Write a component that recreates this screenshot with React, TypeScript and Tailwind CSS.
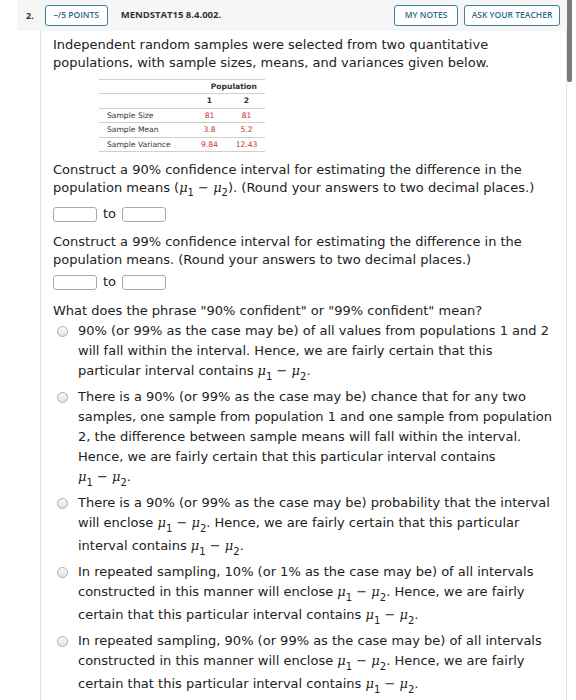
import React from "react";

const Mu = ({ n, tight }: { n: string; tight?: boolean }) => (
  <span className="whitespace-nowrap">
    <span className="italic font-['DejaVu_Serif',serif]">μ</span>
    {tight ? (
      <sub className="align-[-4px] text-[10px] leading-none static">{n}</sub>
    ) : (
      <sub className="align-[-5px] text-[10px] leading-[14px] static">{n}</sub>
    )}
  </span>
);

const Diff = ({ tight }: { tight?: boolean }) => (
  <span className="whitespace-nowrap">
    <Mu n="1" tight={tight} /> − <Mu n="2" tight={tight} />
  </span>
);

const Radio = () => (
  <span className="absolute left-[-21px] top-[5px] w-[11px] h-[11px] rounded-full border border-[#ababab] bg-gradient-to-b from-[#fafafa] to-[#e2e2e2]" />
);

const Option = ({ children }: { children: React.ReactNode }) => (
  <div className="relative leading-[20px]">
    <Radio />
    {children}
  </div>
);

const Box = () => (
  <span className="inline-block w-[44px] h-[15px] border border-[#a9a9a9] rounded-[3px] bg-white align-middle" />
);

export default function App() {
  return (
    <div className="relative w-[576px] h-[700px] overflow-hidden bg-white font-['DejaVu_Sans',Verdana,sans-serif] text-[13px] text-[#222]">
      {/* header */}
      <div className="ml-[17px] w-[550px] h-[31px] bg-[#f6f6f6] flex items-center font-['Open_Sans',sans-serif]">
        <span className="ml-[9px] text-[9px] font-bold text-[#333]">2.</span>
        <span className="ml-[11px] h-[21px] w-[63px] justify-center flex items-center border border-[#3f7fa0] rounded-[3px] bg-white text-[8.5px] font-semibold text-[#2c6a8c]">
          –/5 POINTS
        </span>
        <span className="ml-[13px] text-[9.5px] font-bold text-[#333]">MENDSTAT15 8.4.002.</span>
        <span className="ml-auto h-[21px] w-[64px] justify-center flex items-center border border-[#3f7fa0] rounded-[3px] bg-white text-[8.5px] font-semibold text-[#2c6a8c]">
          MY NOTES
        </span>
        <span className="ml-[6px] mr-[7px] h-[21px] w-[96px] justify-center flex items-center border border-[#3f7fa0] rounded-[3px] bg-white text-[8.5px] font-semibold text-[#2c6a8c]">
          ASK YOUR TEACHER
        </span>
      </div>

      {/* panel */}
      <div className="ml-[40px] w-[527px] h-[669px] border-l border-r border-[#e3e3e3] pl-[12px] pr-[8px] pt-[5px]">
        <p className="leading-[18px]">
          Independent random samples were selected from two quantitative populations, with sample sizes, means, and variances given below.
        </p>

        <table className="ml-[46px] mt-[7px] w-[166px] table-fixed text-[7.6px] text-[#333] border-collapse">
          <colgroup>
            <col className="w-[92px]" />
            <col className="w-[37px]" />
            <col className="w-[37px]" />
          </colgroup>
          <tbody>
            <tr className="border-t border-b border-[#cfcfcf] h-[14px]">
              <td />
              <td colSpan={2} className="text-right pr-[8px] font-bold">Population</td>
            </tr>
            <tr className="border-b border-[#cfcfcf] h-[15px]">
              <td />
              <td className="text-center font-bold">1</td>
              <td className="text-center font-bold">2</td>
            </tr>
            <tr className="border-b border-[#cfcfcf] h-[14px]">
              <td className="pl-[8px]">Sample Size</td>
              <td className="text-center text-[#c9302c]">81</td>
              <td className="text-center text-[#c9302c]">81</td>
            </tr>
            <tr className="border-b border-[#cfcfcf] h-[15px]">
              <td className="pl-[8px]">Sample Mean</td>
              <td className="text-center text-[#c9302c]">3.8</td>
              <td className="text-center text-[#c9302c]">5.2</td>
            </tr>
            <tr className="border-b border-[#cfcfcf] h-[14px]">
              <td className="pl-[8px]">Sample Variance</td>
              <td className="text-center text-[#c9302c]">9.84</td>
              <td className="text-center text-[#c9302c]">12.43</td>
            </tr>
          </tbody>
        </table>

        <p className="mt-[9px] leading-[18px]">
          Construct a 90% confidence interval for estimating the difference in the population means (<Diff tight />). (Round your answers to two decimal places.)
        </p>
        <div className="mt-[7px] flex items-center gap-[6px] h-[18px]">
          <Box />
          <span>to</span>
          <Box />
        </div>

        <p className="mt-[10px] leading-[18px]">
          Construct a 99% confidence interval for estimating the difference in the population means. (Round your answers to two decimal places.)
        </p>
        <div className="mt-[4px] flex items-center gap-[6px] h-[18px]">
          <Box />
          <span>to</span>
          <Box />
        </div>

        <p className="mt-[11px] leading-[18px]">What does the phrase "90% confident" or "99% confident" mean?</p>

        <div className="ml-[25px] mt-[1px] flex flex-col gap-[3px]">
          <Option>
            90% (or 99% as the case may be) of all values from populations 1 and 2 will fall within the interval. Hence, we are fairly certain that this
            <br />
            particular interval contains <Diff />.
          </Option>
          <Option>
            There is a 90% (or 99% as the case may be) chance that for any two samples, one sample from population 1 and one sample from population 2, the difference between sample means will fall within the interval. Hence, we are fairly certain that this particular interval contains
            <br />
            <Diff />.
          </Option>
          <Option>
            There is a 90% (or 99% as the case may be) probability that the interval will enclose <Diff />. Hence, we are fairly certain that this particular interval contains <Diff />.
          </Option>
          <Option>
            In repeated sampling, 10% (or 1% as the case may be) of all intervals constructed in this manner will enclose <Diff />. Hence, we are fairly certain that this particular interval contains <Diff />.
          </Option>
          <Option>
            In repeated sampling, 90% (or 99% as the case may be) of all intervals constructed in this manner will enclose <Diff />. Hence, we are fairly certain that this particular interval contains <Diff />.
          </Option>
        </div>
      </div>

      {/* scrollbar thumb */}
      <div className="absolute right-[4px] top-0 w-[5px] h-[82px] bg-[#7a7a7a] rounded-b-[2px]" />
    </div>
  );
}
